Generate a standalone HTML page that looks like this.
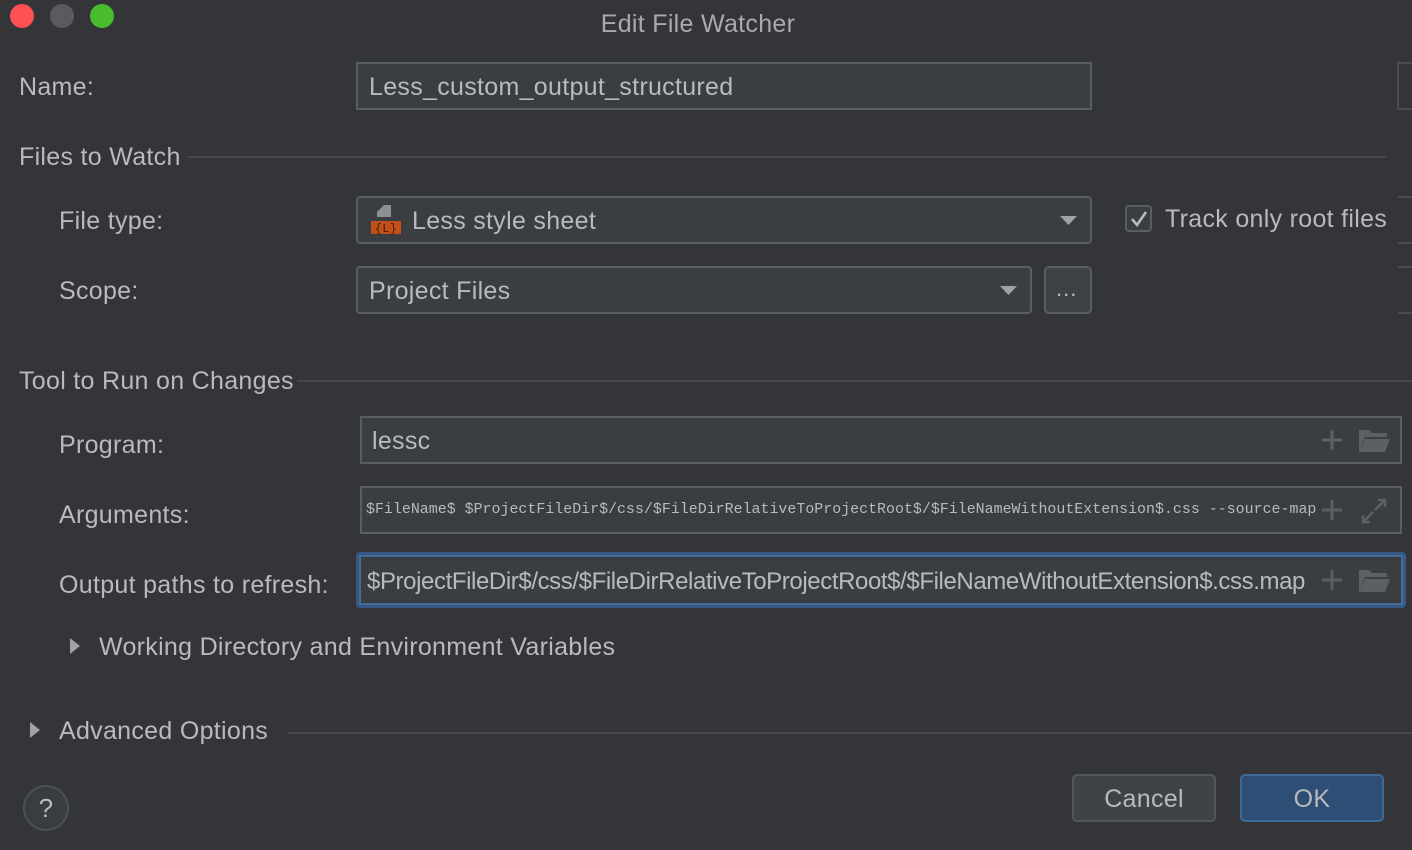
<!DOCTYPE html>
<html><head><meta charset="utf-8"><style>
*{margin:0;padding:0;box-sizing:border-box}
body{width:1412px;height:850px;background:#343538;font-family:"Liberation Sans",sans-serif;color:#b9babb;position:relative;overflow:hidden;font-size:25px;letter-spacing:0.3px}
.a{position:absolute;white-space:nowrap}
.f{position:absolute;background:#3b3e41;border:2px solid #5b5e61}
.line{position:absolute;height:2px;background:#46484b}
.dot{position:absolute;top:4px;width:24px;height:24px;border-radius:50%}
</style></head><body>
<div class="dot" style="left:10px;background:#fe5153"></div>
<div class="dot" style="left:50px;background:#5a5b5e"></div>
<div class="dot" style="left:90px;background:#48bc2d"></div>
<div class="a" style="left:0;width:1396px;text-align:center;top:10px;color:#a9aaab">Edit File Watcher</div>

<div class="a" style="left:19px;top:73px">Name:</div>
<div class="f" style="left:356px;top:62px;width:736px;height:48px"></div>
<div class="a" style="left:369px;top:73px">Less_custom_output_structured</div>
<div class="a" style="left:1397px;top:62px;width:15px;height:48px;border:2px solid #4a4c4f;border-right:none"></div>

<div class="a" style="left:19px;top:143px">Files to Watch</div>
<div class="line" style="left:188px;top:156px;width:1198px"></div>

<div class="a" style="left:59px;top:207px">File type:</div>
<div class="f" style="left:356px;top:196px;width:736px;height:48px;border-radius:4px"></div>
<svg class="a" style="left:371px;top:205px" width="32" height="32"><path d="M13 0h7v12H6V7z" fill="#8a9196"/><rect x="0" y="16" width="30" height="13" fill="#c1501b"/><text x="15" y="27" font-size="12" font-family="Liberation Mono" fill="#4a1a05" text-anchor="middle">{L}</text></svg>
<div class="a" style="left:412px;top:207px">Less style sheet</div>
<svg class="a" style="left:1060px;top:215px" width="18" height="12"><path d="M0 1h17L8.5 10z" fill="#a0a2a4"/></svg>
<div class="a" style="left:1125px;top:205px;width:27px;height:27px;border:2px solid #5b5e61;border-radius:4px;background:#3b3e41"></div>
<svg class="a" style="left:1128px;top:208px" width="22" height="22"><path d="M4 11l5 6 9-13" stroke="#b9babb" stroke-width="2.6" fill="none"/></svg>
<div class="a" style="left:1165px;top:205px">Track only root files</div>
<div class="a" style="left:1398px;top:196px;width:14px;height:48px;border-top:2px solid #4a4c4f;border-bottom:2px solid #4a4c4f"></div>

<div class="a" style="left:59px;top:277px">Scope:</div>
<div class="f" style="left:356px;top:266px;width:676px;height:48px;border-radius:4px"></div>
<div class="a" style="left:369px;top:277px">Project Files</div>
<svg class="a" style="left:1000px;top:285px" width="18" height="12"><path d="M0 1h17L8.5 10z" fill="#a0a2a4"/></svg>
<div class="f" style="left:1044px;top:266px;width:48px;height:48px;border-radius:5px;background:#3f4245"></div>
<div class="a" style="left:1056px;top:276px;font-size:22px;letter-spacing:1px">...</div>
<div class="a" style="left:1398px;top:266px;width:14px;height:48px;border-top:2px solid #4a4c4f;border-bottom:2px solid #4a4c4f"></div>

<div class="a" style="left:19px;top:367px">Tool to Run on Changes</div>
<div class="line" style="left:297px;top:380px;width:1115px"></div>

<div class="a" style="left:59px;top:431px">Program:</div>
<div class="f" style="left:360px;top:416px;width:1042px;height:48px"></div>
<div class="a" style="left:372px;top:427px">lessc</div>

<div class="a" style="left:59px;top:501px">Arguments:</div>
<div class="f" style="left:360px;top:486px;width:1042px;height:48px"></div>
<div class="a" style="left:366px;top:502px;font-family:'Liberation Mono',monospace;font-size:14.9px;letter-spacing:0.03px">$FileName$ $ProjectFileDir$/css/$FileDirRelativeToProjectRoot$/$FileNameWithoutExtension$.css --source-map</div>
<svg class="a" style="left:1360px;top:497px" width="28" height="28"><path d="M15 13l10-10M18 3h7v7M13 15L3 25M3 18v7h7" stroke="#5c6063" stroke-width="2.5" fill="none"/></svg>

<div class="a" style="left:59px;top:571px">Output paths to refresh:</div>
<div class="a" style="left:356px;top:552px;width:1050px;height:56px;border:3px solid #355a86;border-radius:4px"></div>
<div class="f" style="left:359px;top:555px;width:1044px;height:50px;border-color:#466b97"></div>
<div class="a" style="left:367px;top:568px;letter-spacing:-0.4px;font-size:24px">$ProjectFileDir$/css/$FileDirRelativeToProjectRoot$/$FileNameWithoutExtension$.css.map</div>

<svg class="a" style="left:1320px;top:428px" width="24" height="24"><path d="M12 2v20M2 12h20" stroke="#5c6063" stroke-width="3"/></svg>
<svg class="a" style="left:1320px;top:498px" width="24" height="24"><path d="M12 2v20M2 12h20" stroke="#5c6063" stroke-width="3"/></svg>
<svg class="a" style="left:1320px;top:568px" width="24" height="24"><path d="M12 2v20M2 12h20" stroke="#5c6063" stroke-width="3"/></svg>
<svg class="a" style="left:1359px;top:430px" width="32" height="24"><path d="M0 0h10l3 3h15v4H6L0 22z" fill="#5c6063"/><path d="M6 9h25l-5 13H0z" fill="#5c6063"/></svg>
<svg class="a" style="left:1359px;top:570px" width="32" height="24"><path d="M0 0h10l3 3h15v4H6L0 22z" fill="#5c6063"/><path d="M6 9h25l-5 13H0z" fill="#5c6063"/></svg>

<svg class="a" style="left:69px;top:637px" width="12" height="18"><path d="M1 1l10 8-10 8z" fill="#a0a2a4"/></svg>
<div class="a" style="left:99px;top:633px">Working Directory and Environment Variables</div>

<svg class="a" style="left:29px;top:721px" width="12" height="18"><path d="M1 1l10 8-10 8z" fill="#a0a2a4"/></svg>
<div class="a" style="left:59px;top:717px">Advanced Options</div>
<div class="line" style="left:288px;top:732px;width:1124px"></div>

<div class="a" style="left:23px;top:785px;width:46px;height:46px;border-radius:50%;border:2px solid #4d5053;background:#3a3d40;text-align:center;line-height:42px;font-size:26px;color:#b9babb">?</div>

<div class="a" style="left:1072px;top:774px;width:144px;height:48px;border:2px solid #54575a;border-radius:5px;background:#404346;text-align:center;line-height:46px">Cancel</div>
<div class="a" style="left:1240px;top:774px;width:144px;height:48px;border:2px solid #3f6a98;border-radius:5px;background:#2e4e76;text-align:center;line-height:46px">OK</div>
</body></html>
